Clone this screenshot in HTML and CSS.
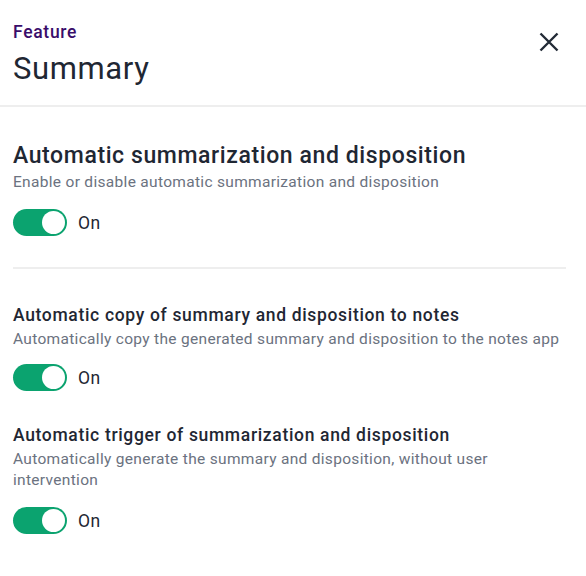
FILE: index.html
```html
<!DOCTYPE html>
<html lang="en">
<head>
<meta charset="utf-8">
<link rel="stylesheet" href="styles.css">
</head>
<body>
<div class="panel">
  <header class="header">
    <div class="titles">
      <div class="eyebrow">Feature</div>
      <h1 class="title">Summary</h1>
    </div>
    <button class="close" aria-label="Close">
      <svg width="20" height="20" viewBox="0 0 20 20"><path d="M1.5 1.5 L18.5 18.5 M18.5 1.5 L1.5 18.5" stroke="#222b36" stroke-width="2.4" stroke-linecap="butt"/></svg>
    </button>
  </header>
  <main class="content">
    <section class="section main-section">
      <h2 class="main-heading">Automatic summarization and disposition</h2>
      <p class="desc">Enable or disable automatic summarization and disposition</p>
      <label class="toggle-row"><span class="toggle"><span class="knob"></span></span><span class="toggle-label">On</span></label>
    </section>
    <hr class="divider">
    <section class="section sub-section">
      <h3 class="sub-heading">Automatic copy of summary and disposition to notes</h3>
      <p class="desc sub-desc">Automatically copy the generated summary and disposition to the notes app</p>
      <label class="toggle-row"><span class="toggle"><span class="knob"></span></span><span class="toggle-label">On</span></label>
    </section>
    <section class="section sub-section">
      <h3 class="sub-heading">Automatic trigger of summarization and disposition</h3>
      <p class="desc sub-desc desc-wrap">Automatically generate the summary and disposition, without user intervention</p>
      <label class="toggle-row"><span class="toggle"><span class="knob"></span></span><span class="toggle-label">On</span></label>
    </section>
  </main>
</div>
</body>
</html>
```

FILE: styles.css
```css
* { box-sizing: border-box; }
html, body { margin: 0; padding: 0; background: #fff; }
body { font-family: Roboto, "Noto Sans", sans-serif; color: #1f2733; }

.panel { width: 586px; }

.header {
  display: flex;
  justify-content: space-between;
  align-items: flex-start;
  padding: 21px 20px 0 13px;
  height: 107px;
  border-bottom: 2px solid #eeeeee;
}
.eyebrow { font-size: 17.5px; font-weight: 500; color: #3a0d6a; line-height: 22px; letter-spacing: 0.04em; }
.title { margin: 8px 0 0; font-size: 31px; font-weight: 400; line-height: 36px; color: #1f2733; letter-spacing: 0.02em; }
.close {
  border: 0; background: none; padding: 0; margin: 11px 7px 0 0;
  width: 20px; height: 20px; display: flex; cursor: pointer;
}

.content { padding: 0 20px 0 13px; }
.section { display: flex; flex-direction: column; }
.main-section { padding-top: 35px; }
.main-heading { margin: 0; font-size: 23px; font-weight: 500; line-height: 28px; color: #1f2733; letter-spacing: 0.026em; }
.sub-heading { margin: 0; font-size: 17.5px; font-weight: 500; line-height: 22px; color: #1f2733; letter-spacing: 0.038em; }
.desc { margin: 2px 0 0; font-size: 15.5px; line-height: 21px; color: #6b7280; letter-spacing: 0.02em; }
.sub-desc { margin-top: 3px; }
.desc-wrap { max-width: 500px; margin-bottom: 2px; }
.sub-section { padding-top: 35px; }
.sub-section + .sub-section { padding-top: 33px; }

.toggle-row { display: flex; align-items: center; gap: 11px; margin-top: 16px; }
.sub-section .toggle-row { margin-top: 14px; }
.toggle {
  width: 54px; height: 27px; border-radius: 14px; background: #0ba36f;
  display: flex; align-items: center; justify-content: flex-end; padding: 0 2px;
}
.knob { width: 23px; height: 23px; border-radius: 50%; background: #fff; }
.toggle-label { font-size: 17.5px; color: #1f2733; letter-spacing: 0.02em; }

.divider { border: 0; height: 2px; background: #eeeeee; margin: 31px 0 0; }
```
